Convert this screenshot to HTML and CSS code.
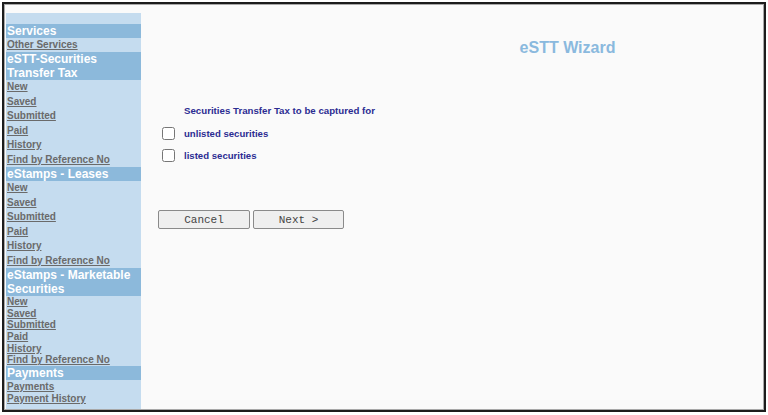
FILE: index.html
```html
<!DOCTYPE html>
<html lang="en">
<head>
    <meta charset="UTF-8">
    <title>eSTT Wizard</title>
    <link rel="stylesheet" href="styles.css">
</head>
<body>
    <div class="frame">
        <div class="menu">
            <div class="menu-head">Services</div>
            <div class="menu-group">
                <a href="#">Other Services</a>
            </div>
            <div class="menu-head">eSTT-Securities Transfer Tax</div>
            <div class="menu-group wide">
                <a href="#">New</a>
                <a href="#">Saved</a>
                <a href="#">Submitted</a>
                <a href="#">Paid</a>
                <a href="#">History</a>
                <a href="#">Find by Reference No</a>
            </div>
            <div class="menu-head">eStamps - Leases</div>
            <div class="menu-group wide">
                <a href="#">New</a>
                <a href="#">Saved</a>
                <a href="#">Submitted</a>
                <a href="#">Paid</a>
                <a href="#">History</a>
                <a href="#">Find by Reference No</a>
            </div>
            <div class="menu-head">eStamps - Marketable Securities</div>
            <div class="menu-group tight">
                <a href="#">New</a>
                <a href="#">Saved</a>
                <a href="#">Submitted</a>
                <a href="#">Paid</a>
                <a href="#">History</a>
                <a href="#">Find by Reference No</a>
            </div>
            <div class="menu-head">Payments</div>
            <div class="menu-group pay">
                <a href="#">Payments</a>
                <a href="#">Payment History</a>
            </div>
        </div>

        <div class="main">
            <div class="title">eSTT Wizard</div>
            <div class="intro">Securities Transfer Tax to be captured for</div>
            <label class="option"><input type="checkbox"> <span>unlisted securities</span></label>
            <label class="option"><input type="checkbox"> <span>listed securities</span></label>
            <div class="buttons">
                <button type="button" class="btn">Cancel</button>
                <button type="button" class="btn next">Next &gt;</button>
            </div>
        </div>
    </div>
</body>
</html>
```

FILE: styles.css
```css
* {
    box-sizing: border-box;
}

body {
    margin: 0;
    background: #fff;
    font-family: "Liberation Sans", Arial, sans-serif;
}

.frame {
    display: flex;
    width: 764px;
    height: 410px;
    margin: 2px;
    border: 2px solid #1c1c1c;
    box-shadow: inset 0 0 0 1px #a8a8a8;
    background: #fafafa;
}

/* left menu */
.menu {
    width: 135px;
    margin: 9px 0 1px 2px;
    padding-top: 11px;
    background: #c5dcef;
    flex-shrink: 0;
}

.menu-head {
    background: #8cb9db;
    color: #fff;
    font-size: 12px;
    font-weight: bold;
    line-height: 14px;
    padding-left: 1px;
}

.menu-group a {
    display: block;
    height: 14px;
    line-height: 14px;
    padding-left: 1px;
    color: #6a6a6a;
    font-size: 10px;
    font-weight: bold;
    text-decoration: underline;
}

.menu-group.wide a {
    height: 14.5px;
    line-height: 14.5px;
}

.menu-group.tight a {
    height: 11.66px;
    line-height: 11.66px;
}

.menu-group.pay a {
    height: 12px;
    line-height: 12px;
}

.menu-group.pay a:first-child {
    margin-top: 1px;
}

/* wizard */
.main {
    flex: 1;
    padding-left: 17px;
}

.title {
    margin-top: 34px;
    padding-left: 213px;
    text-align: center;
    color: #8ab9de;
    font-size: 16px;
    font-weight: bold;
    line-height: 19px;
}

.intro {
    margin-top: 47px;
    padding-left: 26px;
    color: #2c2c92;
    font-size: 9.7px;
    font-weight: bold;
    line-height: 14px;
}

.option {
    display: flex;
    align-items: center;
    height: 22px;
    color: #2c2c92;
    font-size: 9.6px;
    font-weight: bold;
}

.option:first-of-type {
    margin-top: 4px;
}

.option input {
    width: 13px;
    height: 13px;
    margin: 0 9px 0 4px;
}

.buttons {
    display: flex;
    gap: 3px;
    margin-top: 44px;
}

.btn {
    width: 92px;
    height: 19px;
    padding: 0;
    background: #efefef;
    border: 1px solid #8a8a8a;
    border-radius: 2px;
    color: #444;
    font-family: "Liberation Mono", "Courier New", monospace;
    font-size: 11px;
}

.btn.next {
    width: 91px;
}
```
